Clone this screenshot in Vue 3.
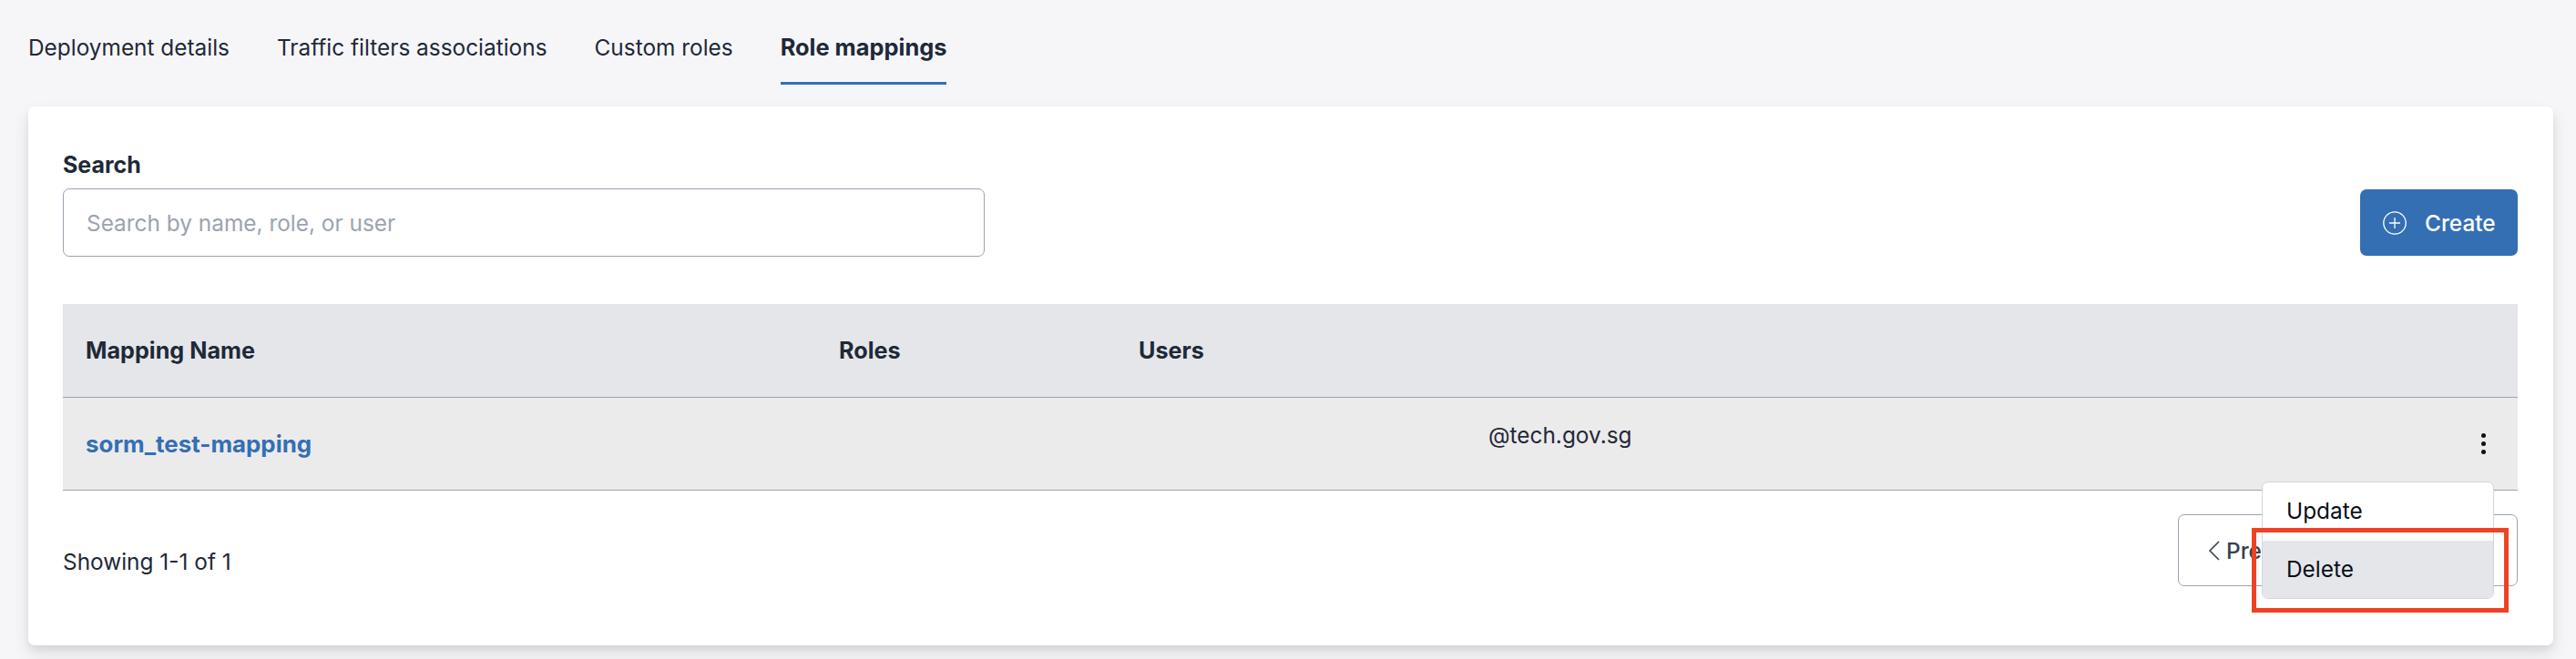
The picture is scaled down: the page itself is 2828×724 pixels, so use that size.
<script setup>
import { ref } from 'vue';

const tabs = ['Deployment details', 'Traffic filters associations', 'Custom roles', 'Role mappings'];
const activeTab = ref('Role mappings');
const search = ref('');
const menuOpen = ref(true);

const mappings = [{ name: 'sorm_test-mapping', roles: '', users: '@tech.gov.sg' }];
</script>

<template>
  <div class="page">
    <nav class="tabs">
      <a
        v-for="tab in tabs"
        :key="tab"
        class="tab"
        :class="{ active: tab === activeTab }"
        @click="activeTab = tab"
      >
        {{ tab }}
      </a>
    </nav>

    <section class="card">
      <div class="toolbar">
        <div class="search">
          <label class="search__label" for="search">Search</label>
          <input
            id="search"
            v-model="search"
            class="search__input"
            type="text"
            placeholder="Search by name, role, or user"
          />
        </div>
        <button class="create">
          <svg class="create__icon" viewBox="0 0 26 26" fill="none" stroke="currentColor" stroke-width="1.3">
            <circle cx="13" cy="13" r="12.2" />
            <path d="M13 7v12M7 13h12" />
          </svg>
          Create
        </button>
      </div>

      <div class="table">
        <div class="row head">
          <div class="cell">Mapping Name</div>
          <div class="cell">Roles</div>
          <div class="cell">Users</div>
        </div>
        <div v-for="item in mappings" :key="item.name" class="row body">
          <a class="cell name">{{ item.name }}</a>
          <div class="cell">{{ item.roles }}</div>
          <div class="cell users">{{ item.users }}</div>
          <button class="kebab" @click="menuOpen = !menuOpen">
            <span></span><span></span><span></span>
          </button>
        </div>
      </div>

      <div class="footer">
        <span class="count">Showing 1-1 of 1</span>
        <div class="pager">
          <button class="pager__btn">
            <svg class="pager__chevron" viewBox="0 0 13 22" fill="none" stroke="currentColor" stroke-width="1.6">
              <path d="M12 1 2 11l10 10" />
            </svg>
            Prev
          </button>
        </div>

        <div v-if="menuOpen" class="menu">
          <div class="menu__item">Update</div>
          <div class="menu__item hovered">Delete</div>
        </div>
        <div class="highlight"></div>
      </div>
    </section>
  </div>
</template>

<style scoped>
.page {
  height: 724px;
  box-sizing: border-box;
  padding: 31px 25px 0 31px;
  background: #f6f6f9;
  font-family: Inter, sans-serif;
  font-size: 24.4px;
  color: #1f2937;
  overflow: hidden;
}

.tabs {
  display: flex;
  gap: 52px;
  height: 62px;
  margin-bottom: 24px;
}

.tab {
  box-sizing: border-box;
  height: 62px;
  line-height: 42px;
  white-space: nowrap;
}

.tab.active {
  font-size: 25.4px;
  font-weight: 700;
  border-bottom: 3px solid #346fb4;
}

.card {
  height: 592px;
  box-sizing: border-box;
  padding: 46px 39px 0 38px;
  background: #fff;
  border-radius: 7px;
  box-shadow: 0 9px 18px rgba(0, 0, 0, 0.1), 0 4px 7px rgba(0, 0, 0, 0.05);
}

.toolbar {
  display: flex;
  justify-content: space-between;
  align-items: flex-end;
  height: 119px;
}

.search {
  display: flex;
  flex-direction: column;
}

.search__label {
  font-size: 25px;
  font-weight: 700;
  line-height: 36px;
  margin-bottom: 8px;
}

.search__input {
  box-sizing: border-box;
  width: 1012px;
  height: 75px;
  padding: 0 25px;
  border: 1.5px solid #9ca3af;
  border-radius: 7px;
  outline: none;
  font: inherit;
  font-size: 24.4px;
  color: inherit;
}

.search__input::placeholder {
  color: #9ca3af;
}

.create {
  display: flex;
  align-items: center;
  gap: 20px;
  box-sizing: border-box;
  width: 173px;
  height: 73px;
  margin-bottom: 1px;
  padding: 0 0 0 25px;
  border: none;
  border-radius: 7px;
  background: #346fb4;
  color: #fff;
  font: inherit;
  font-weight: 500;
}

.create__icon {
  width: 26px;
  height: 26px;
}

.table {
  margin-top: 52px;
}

.row {
  position: relative;
  display: grid;
  grid-template-columns: 827px 329px 1fr;
  align-items: center;
  box-sizing: border-box;
  height: 103px;
  border-bottom: 1.5px solid #9ca3af;
}

.head {
  background: #e5e6ea;
  font-size: 25.2px;
  font-weight: 700;
}

.body {
  height: 102px;
  background: #ebebec;
}

.cell {
  padding-left: 25px;
}

.name {
  font-size: 25.9px;
  font-weight: 700;
  color: #346fb4;
}

.users {
  padding-left: 409px;
  padding-bottom: 20px;
}

.kebab {
  position: absolute;
  top: 39px;
  right: 35px;
  display: flex;
  flex-direction: column;
  gap: 4px;
  padding: 0;
  border: none;
  background: none;
}

.kebab span {
  width: 5px;
  height: 5px;
  border-radius: 50%;
  background: #111;
}

.footer {
  position: relative;
  display: flex;
  justify-content: space-between;
  align-items: center;
  margin-top: 26px;
  height: 79px;
}

.count {
  padding-top: 24px;
}

.pager {
  display: flex;
  box-sizing: border-box;
  width: 373px;
  height: 79px;
  border: 1.5px solid #9ca3af;
  border-radius: 7px;
}

.pager__btn {
  display: flex;
  align-items: center;
  gap: 7px;
  padding: 0 0 0 32px;
  border: none;
  background: none;
  font: inherit;
  font-weight: 500;
  color: #374151;
}

.pager__chevron {
  width: 13px;
  height: 22px;
}

.menu {
  position: absolute;
  top: -36px;
  right: 26px;
  z-index: 2;
  box-sizing: border-box;
  width: 255px;
  height: 129px;
  border: 1px solid #d1d5db;
  border-radius: 7px;
  background: #fff;
  overflow: hidden;
}

.menu__item {
  height: 64px;
  padding: 0 26px;
  line-height: 62px;
  color: #0b0f19;
}

.hovered {
  background: #e5e6ea;
}

.highlight {
  position: absolute;
  top: 15px;
  right: 10px;
  z-index: 3;
  box-sizing: border-box;
  width: 282px;
  height: 93px;
  border: 5px solid #ee4225;
}
</style>

<style>
body {
  background: #f6f6f9;
}
</style>
